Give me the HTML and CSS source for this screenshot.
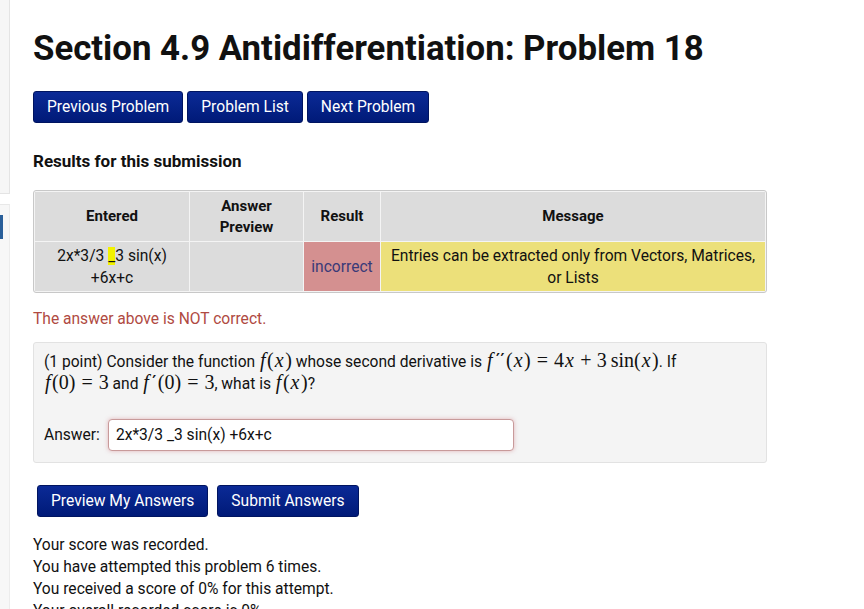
FILE: index.html
```html
<!DOCTYPE html>
<html>
<head>
<meta charset="utf-8">
<link rel="stylesheet" href="styles.css">
</head>
<body>
<div class="page">
  <aside class="side">
    <div class="side-top"></div>
    <div class="side-bottom"><div class="side-mark"></div></div>
  </aside>
  <main class="main">
    <h1 class="title">Section 4.9 Antidifferentiation: Problem 18</h1>
    <div class="nav">
      <button class="btn">Previous Problem</button>
      <button class="btn">Problem List</button>
      <button class="btn">Next Problem</button>
    </div>
    <h2 class="subtitle">Results for this submission</h2>
    <table class="results">
      <tr>
        <th class="c-entered">Entered</th>
        <th class="c-preview">Answer<br>Preview</th>
        <th class="c-result">Result</th>
        <th class="c-message">Message</th>
      </tr>
      <tr>
        <td class="grey">2x*3/3 <span class="hl">_</span>3 sin(x)<br>+6x+c</td>
        <td class="grey"></td>
        <td class="bad">incorrect</td>
        <td class="msg">Entries can be extracted only from Vectors, Matrices,<br>or Lists</td>
      </tr>
    </table>
    <p class="warn">The answer above is NOT correct.</p>
    <div class="problem">
      <p class="ptext">(1 point) Consider the function <span class="m"><i>f</i>(<i>x</i>)</span> whose second derivative is <span class="m"><i>f</i><span class="pr">&#8242;&#8242;</span>(<i>x</i>)<span class="rel">=</span>4<i>x</i><span class="bin">+</span>3<span class="fn">sin</span>(<i>x</i>)</span>. If<br><span class="m"><i>f</i>(0)<span class="rel">=</span>3</span> and <span class="m"><i>f</i><span class="pr">&#8242;</span>(0)<span class="rel">=</span>3</span>, what is <span class="m"><i>f</i>(<i>x</i>)</span>?</p>
      <div class="answer">
        <label class="alabel">Answer:</label>
        <div class="ainput">2x*3/3 _3 sin(x) +6x+c</div>
      </div>
    </div>
    <div class="actions">
      <button class="btn">Preview My Answers</button>
      <button class="btn">Submit Answers</button>
    </div>
    <div class="score">
      <p>Your score was recorded.</p>
      <p>You have attempted this problem 6 times.</p>
      <p>You received a score of 0% for this attempt.</p>
      <p>Your overall recorded score is 0%.</p>
    </div>
  </main>
</div>
</body>
</html>
```
FILE: styles.css
```css
* { box-sizing: border-box; }
html, body { margin: 0; padding: 0; background: #fff; }
body { font-family: Roboto, "Liberation Sans", Arial, sans-serif; color: #111; overflow: hidden; height: 609px; }
.page { display: flex; height: 609px; }
.side { width: 10px; display: flex; flex-direction: column; gap: 10px; flex: none; }
.side-top { height: 194px; background: #f6f6f6; border-right: 1px solid #e4e4e4; border-bottom: 1px solid #e4e4e4; }
.side-bottom { flex: 1; background: #f7f7f7; border-right: 1px solid #ececec; border-top: 1px solid #e8e8e8; padding-top: 10px; }
.side-mark { width: 3px; height: 24px; background: #2a5f9a; }
.main { padding-left: 23px; flex: 1; }
.title { font-size: 34.8px; font-weight: 700; margin: 28px 0 0; line-height: 40px; }
.nav { display: flex; gap: 4px; margin-top: 23px; }
.btn { font-family: Roboto, "Liberation Sans", Arial, sans-serif; font-size: 15.6px; color: #fff; background: linear-gradient(#0b2a96, #001a78); border: 1px solid #001460; border-radius: 3px; height: 32px; padding: 0 13px; cursor: pointer; }
.subtitle { font-size: 17px; font-weight: 700; margin: 27px 0 0; line-height: 22px; }
.results { margin-top: 18px; border-collapse: separate; border-spacing: 1px; border: 1px solid #c8c8c8; border-radius: 3px; background: #f4f4f4; width: 734px; font-size: 15.6px; }
.results th { background: #dcdcdc; height: 49px; font-weight: 700; line-height: 21px; text-align: center; padding: 0 4px; font-size: 15px; }
.results td { height: 49px; text-align: center; line-height: 22px; padding: 0 6px; }
.c-entered { width: 154px; }
.c-preview { width: 113px; }
.c-result { width: 76px; }
.grey { background: #dcdcdc; }
.bad { background: #d49090; color: #3a3a78; }
.msg { background: #ece07a; }
.hl { background: #f2f200; }
.warn { color: #b04a42; font-size: 15.6px; margin: 16px 0 0; line-height: 20px; }
.problem { margin-top: 13px; width: 734px; background: #f4f4f4; border: 1px solid #e2e2e2; border-radius: 3px; padding: 8px 10px 11px; }
.ptext { margin: 0; font-size: 15.6px; line-height: 22px; }
.m { font-family: "Liberation Serif", "DejaVu Serif", serif; font-size: 20px; line-height: 16px; }
.m i { font-family: "Liberation Serif", serif; font-style: italic; padding: 0 1.5px 0 1px; }
.pr { font-family: "DejaVu Sans", sans-serif; font-size: 15px; vertical-align: 2px; margin: 0 1px 0 2px; letter-spacing: 0.5px; line-height: 10px; font-weight: 700; }
.fn { margin-left: 4px; }
.rel { padding: 0 6px; }
.bin { padding: 0 5px; }
.answer { display: flex; align-items: center; gap: 8px; margin-top: 24px; }
.alabel { font-size: 15.6px; }
.ainput { width: 406px; height: 32px; background: #fff; border: 1px solid #c89a9a; border-radius: 4px; box-shadow: 0 0 4px rgba(210,120,130,0.5); font-size: 15.6px; padding: 0 7px; line-height: 30px; }
.actions { display: flex; gap: 9px; margin-top: 22px; padding-left: 4px; }
.score { margin-top: 17px; }
.score p { margin: 0; font-size: 15.6px; line-height: 22px; }
```
